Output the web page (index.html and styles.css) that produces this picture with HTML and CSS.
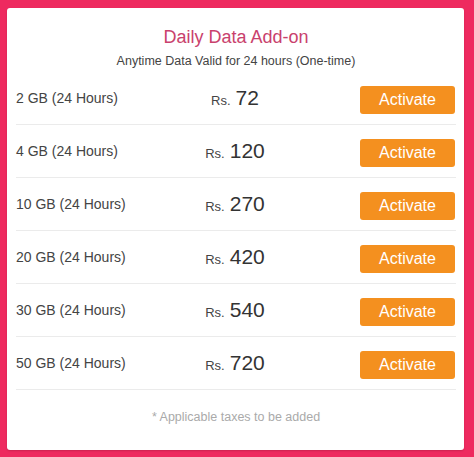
FILE: index.html
```html
<!DOCTYPE html>
<html>
<head>
<meta charset="utf-8">
<link rel="stylesheet" href="styles.css">
</head>
<body>
<div class="card">
  <div class="head">
    <h1 class="title">Daily Data Add-on</h1>
    <p class="sub">Anytime Data Valid for 24 hours (One-time)</p>
  </div>
  <div class="rows">
    <div class="row"><span class="label">2 GB (24 Hours)</span><span class="price"><span class="cur">Rs.</span><span class="amt">72</span></span><button class="btn">Activate</button></div>
    <div class="row"><span class="label">4 GB (24 Hours)</span><span class="price"><span class="cur">Rs.</span><span class="amt">120</span></span><button class="btn">Activate</button></div>
    <div class="row"><span class="label">10 GB (24 Hours)</span><span class="price"><span class="cur">Rs.</span><span class="amt">270</span></span><button class="btn">Activate</button></div>
    <div class="row"><span class="label">20 GB (24 Hours)</span><span class="price"><span class="cur">Rs.</span><span class="amt">420</span></span><button class="btn">Activate</button></div>
    <div class="row"><span class="label">30 GB (24 Hours)</span><span class="price"><span class="cur">Rs.</span><span class="amt">540</span></span><button class="btn">Activate</button></div>
    <div class="row"><span class="label">50 GB (24 Hours)</span><span class="price"><span class="cur">Rs.</span><span class="amt">720</span></span><button class="btn">Activate</button></div>
  </div>
  <p class="note">* Applicable taxes to be added</p>
</div>
</body>
</html>
```
FILE: styles.css
```css
html, body {
  margin: 0;
  height: 100%;
}
body {
  background: #ee2a5f;
  padding: 8px 10px 7px 7px;
  box-sizing: border-box;
  font-family: "Liberation Sans", Arial, sans-serif;
}
.card {
  background: #fff;
  width: 457px;
  height: 442px;
  border-radius: 3px;
  box-sizing: border-box;
  padding: 0 8px 0 9px;
  box-shadow: 0 1px 2px rgba(0,0,0,0.15);
}
.head {
  padding-top: 18px;
  height: 64px;
  box-sizing: border-box;
  text-align: center;
}
.title {
  margin: 0;
  font-size: 18px;
  line-height: 22px;
  font-weight: normal;
  color: #c9416d;
}
.sub {
  margin: 5px 0 0;
  font-size: 12.5px;
  line-height: 16px;
  color: #444;
}
.row {
  display: grid;
  grid-template-columns: 150px 138px 1fr;
  align-items: center;
  height: 52px;
  border-bottom: 1px solid #ebebeb;
}
.label {
  font-size: 14px;
  color: #444;
}
.price {
  text-align: center;
  color: #333;
  white-space: nowrap;
}
.cur {
  font-size: 13px;
  color: #444;
  margin-right: 5px;
}
.amt {
  font-size: 21px;
}
.btn {
  justify-self: end;
  margin: 3px 1px 0 0;
  width: 95px;
  height: 28px;
  border: none;
  border-radius: 3px;
  background: #f4901f;
  color: #fff;
  font-family: "Liberation Sans", Arial, sans-serif;
  font-size: 16px;
  padding: 0;
}
.note {
  margin: 19px 0 0;
  text-align: center;
  font-size: 12.5px;
  line-height: 16px;
  color: #aaa;
}
```
